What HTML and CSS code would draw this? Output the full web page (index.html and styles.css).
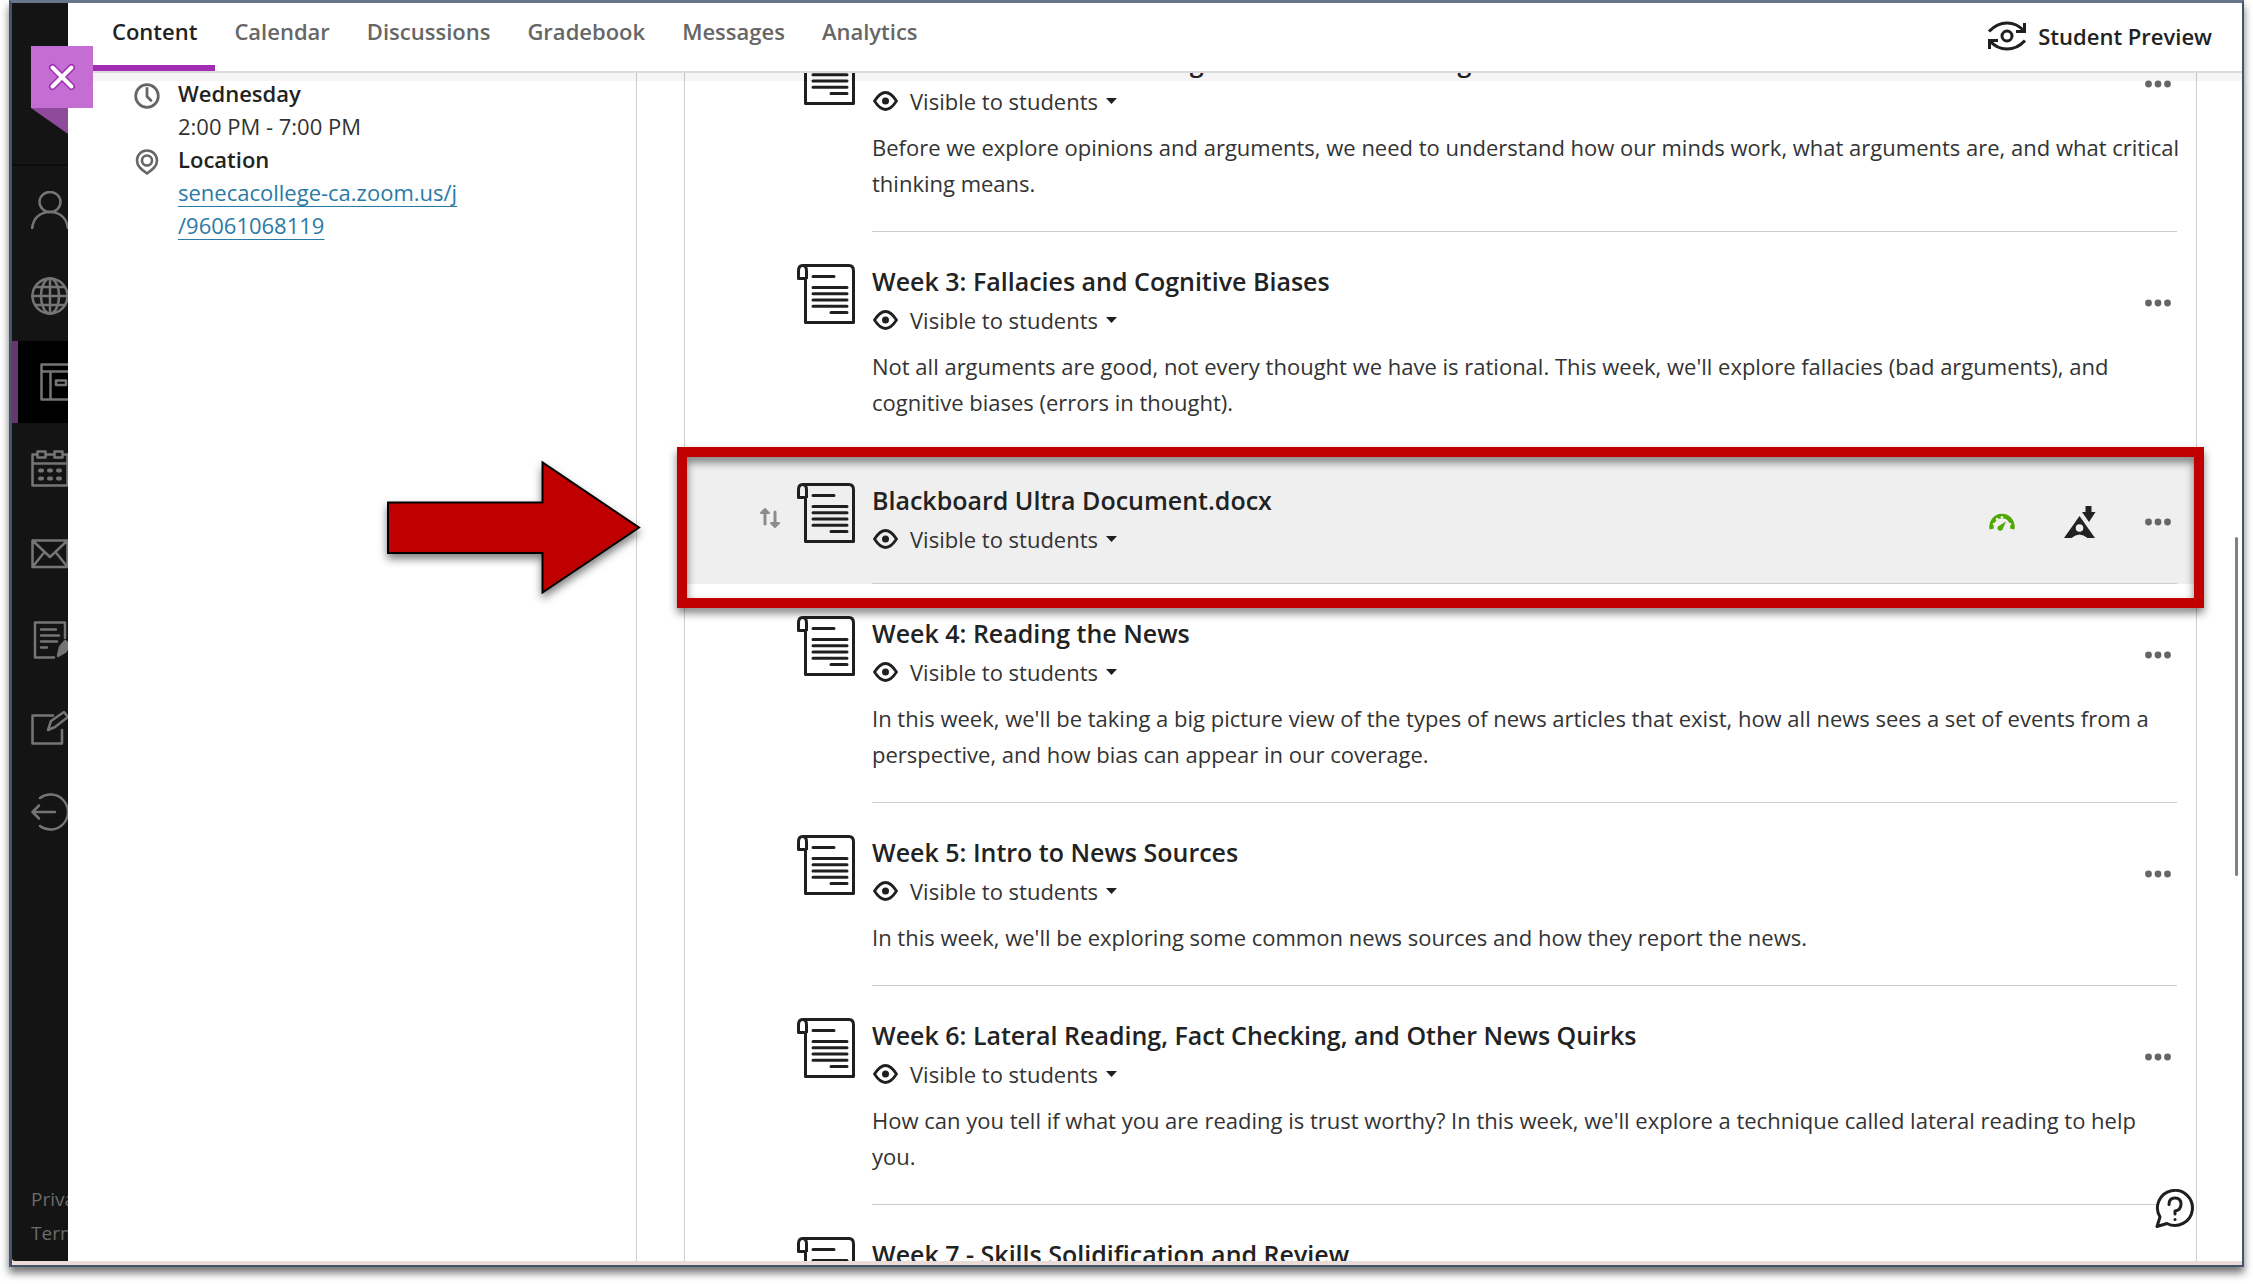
FILE: index.html
```html
<!DOCTYPE html>
<html lang="en">
<head>
<meta charset="utf-8">
<title>Course Content</title>
<link rel="stylesheet" href="styles.css">
</head>
<body>
<svg class="defs" aria-hidden="true">
  <symbol id="doc" viewBox="0 0 58 60">
    <g fill="none" stroke="#1f1f1f" stroke-width="3" stroke-linejoin="round">
      <path d="M8.5 15V58.5H56.500V7q0-5.500-4.500-5.500H6"/>
      <path d="M8.500 14.500H1.500V7q0-5.500 4-5.500t4 5.500V15"/>
    </g>
    <g stroke="#1f1f1f" stroke-width="3" stroke-linecap="round">
      <path d="M16 12.500H37M16 23.500H50M16 29.800H50M16 36H50M16 42.300H50M34 48.600H50"/>
    </g>
  </symbol>
  <symbol id="eye" viewBox="0 0 25 20">
    <path d="M1.500 10Q7 1.500 12.500 1.500T23.500 10Q18 18.500 12.500 18.500T1.500 10Z" fill="none" stroke="#1f1f1f" stroke-width="2.800" stroke-linejoin="round"/>
    <circle cx="12.500" cy="10" r="3.500" fill="#1f1f1f"/>
  </symbol>
  <symbol id="caret" viewBox="0 0 11 6"><path d="M0 0H11L5.500 6Z" fill="#1f1f1f"/></symbol>
  <symbol id="dots" viewBox="0 0 26 8">
    <g fill="#666"><circle cx="3.500" cy="4" r="3.400"/><circle cx="13" cy="4" r="3.400"/><circle cx="22.500" cy="4" r="3.400"/></g>
  </symbol>
</svg>

<div class="frame">
  <aside class="rail">
    <ul class="rail-list">
      <li><a href="#" aria-label="Profile"><svg width="38" height="38" viewBox="0 0 38 38"><ellipse cx="19" cy="11" rx="10.500" ry="10"/><path d="M1 38C2 27 9 21 19 21s17 6 18 17"/></svg></a></li>
      <li><a href="#" aria-label="Institution"><svg width="38" height="38" viewBox="0 0 38 38"><circle cx="19" cy="19" r="17.500"/><ellipse cx="19" cy="19" rx="9" ry="17.500"/><path d="M19 1V37M1 19H37M4.500 10H33.500M4.500 28H33.500"/></svg></a></li>
      <li class="active"><a href="#" aria-label="Courses"><svg width="38" height="38" viewBox="0 0 38 38"><path d="M1.500 1.500H46V36.500H1.500ZM1.500 8.500H46M10.500 8.500V36.500M16 17.500H26V22H16Z"/></svg></a></li>
      <li><a href="#" aria-label="Calendar"><svg width="38" height="38" viewBox="0 0 38 38"><path d="M1.500 5.500V36.500H36.500V5.500M1.500 14.500H36.500M1.500 5.500H6M15 5.500H23M32 5.500H36.500M6.500 2.500H14.500V8.500H6.500ZM23.500 2.500H31.500V8.500H23.500Z"/><path class="blob" d="M9 21.500H11M18 21.500H20M27 21.500H29M9 29.500H11M18 29.500H20M27 29.500H29"/></svg></a></li>
      <li><a href="#" aria-label="Messages"><svg width="38" height="38" viewBox="0 0 38 38"><path d="M1.500 5.500H36.500V32H1.500ZM1.500 5.500L19 22L36.500 5.500M1.500 32L13.500 17M36.500 32L24.500 17"/></svg></a></li>
      <li><a href="#" aria-label="Grades"><svg width="38" height="38" viewBox="0 0 38 38"><path d="M34 17V1.500H4V36.500H23M10 8.500H25M10 14.500H28M10 20.500H26M10 26.500H16"/><path class="solid" d="M27 35l2-9 5-6 5 4-5 7z"/></svg></a></li>
      <li><a href="#" aria-label="Tools"><svg width="38" height="38" viewBox="0 0 38 38"><path d="M22 8.500H1.500V36.500H31V23M17 23l3-9L33 5l4 5L24 20z"/></svg></a></li>
      <li><a href="#" aria-label="Sign Out"><svg width="38" height="38" viewBox="0 0 38 38"><path d="M9 5A17.500 17.500 0 1 1 9 33M24 19H2M8 12.500L1.500 19L8 25.500"/></svg></a></li>
    </ul>
    <div class="rail-foot"><a href="#">Privacy</a><a href="#">Terms</a></div>
  </aside>

  <div class="course">
    <header class="topbar">
      <nav class="tabs">
        <a href="#" class="current">Content</a><a href="#">Calendar</a><a href="#">Discussions</a><a href="#">Gradebook</a><a href="#">Messages</a><a href="#">Analytics</a>
      </nav>
      <button class="preview">
        <svg width="38" height="30" viewBox="0 0 38 30" fill="none" stroke="#1f1f1f" stroke-width="3"><circle cx="19" cy="15" r="5"/><path d="M1 10.500Q9 2 19 2T36 10M36.500 2V10.500H28M37 19.500Q29 28 19 28T2 20M1.500 28V19.500H10"/></svg>
        Student Preview
      </button>
    </header>

    <main class="main">
      <section class="details">
        <div class="detail">
          <svg width="26" height="26" viewBox="0 0 26 26" fill="none" stroke="#666" stroke-width="2.800"><circle cx="13" cy="13" r="11.300"/><path d="M13 5.500V13.500L17 17.500" stroke-linecap="round"/></svg>
          <div><strong>Wednesday</strong><span>2:00 PM - 7:00 PM</span></div>
        </div>
        <div class="detail">
          <svg width="26" height="26" viewBox="0 0 26 26" fill="none" stroke="#666" stroke-width="2.600"><path d="M13 24.500C7 20 3 17 3 11.500a10 10 0 0 1 20 0C23 17 19 20 13 24.500Z"/><circle cx="13" cy="11.500" r="5"/></svg>
          <div><strong>Location</strong><a href="#">senecacollege-ca.zoom.us/j<br>/96061068119</a></div>
        </div>
      </section>

      <section class="outline">
        <article class="item">
          <svg class="doc"><use href="#doc"/></svg>
          <div class="body">
            <div class="head">
              <div><h3>Week 2: Introduction to Arguments from Thinking</h3>
              <button class="status"><svg class="eye"><use href="#eye"/></svg>Visible to students<svg class="caret"><use href="#caret"/></svg></button></div>
              <div class="actions"><button aria-label="More options"><svg class="dots"><use href="#dots"/></svg></button></div>
            </div>
            <p>Before we explore opinions and arguments, we need to understand how our minds work, what arguments are, and what critical thinking means.</p>
          </div>
        </article>
        <article class="item">
          <svg class="doc"><use href="#doc"/></svg>
          <div class="body">
            <div class="head">
              <div><h3>Week 3: Fallacies and Cognitive Biases</h3>
              <button class="status"><svg class="eye"><use href="#eye"/></svg>Visible to students<svg class="caret"><use href="#caret"/></svg></button></div>
              <div class="actions"><button aria-label="More options"><svg class="dots"><use href="#dots"/></svg></button></div>
            </div>
            <p>Not all arguments are good, not every thought we have is rational. This week, we'll explore fallacies (bad arguments), and cognitive biases (errors in thought).</p>
          </div>
        </article>
        <article class="item selected">
          <svg class="drag" width="20" height="22" viewBox="0 0 20 22" fill="none" stroke="#8c8c8c" stroke-width="3"><path d="M5 17V4M15 5V18" stroke-linecap="round"/><path d="M1 6L5 2L9 6ZM11 16L15 20L19 16Z" stroke-width="2" fill="#8c8c8c" stroke-linejoin="round"/></svg>
          <svg class="doc"><use href="#doc"/></svg>
          <div class="body">
            <div class="head">
              <div><h3>Blackboard Ultra Document.docx</h3>
              <button class="status"><svg class="eye"><use href="#eye"/></svg>Visible to students<svg class="caret"><use href="#caret"/></svg></button></div>
              <div class="actions">
                <button aria-label="Accessibility score"><svg width="26" height="18" viewBox="0 0 26 18"><path d="M2.800 16A10.500 10.500 0 1 1 23.200 16" fill="none" stroke="#4fa800" stroke-width="4.500"/><g fill="#efefef"><circle cx="5" cy="11" r="1.300"/><circle cx="8" cy="6" r="1.300"/><circle cx="13" cy="4.200" r="1.300"/><circle cx="21" cy="11" r="1.300"/></g><path d="M17 8.500L9 13.500a2.600 2.600 0 1 0 4.500 3z" fill="#4fa800"/></svg></button>
                <button aria-label="Alternative formats"><svg width="32" height="32" viewBox="0 0 32 32"><path d="M15.500 10L31 32H23.500Q15.500 25 7.500 32H0Z" fill="#222"/><circle cx="15.500" cy="22" r="3.800" fill="#efefef"/><path d="M21.500 0H27.500V6H31.500L25 16L18 6H21.500Z" fill="#222" /></svg></button>
                <button aria-label="More options"><svg class="dots"><use href="#dots"/></svg></button>
              </div>
            </div>
          </div>
          <div class="callout-box"></div>
          <svg class="callout-arrow" width="254" height="134" viewBox="0 0 254 134"><path d="M1 42.500H155.500V2.500L252 67.500L155.500 132.500V93H1Z" fill="#c00000" stroke="#000" stroke-width="2"/></svg>
        </article>
        <article class="item">
          <svg class="doc"><use href="#doc"/></svg>
          <div class="body">
            <div class="head">
              <div><h3>Week 4: Reading the News</h3>
              <button class="status"><svg class="eye"><use href="#eye"/></svg>Visible to students<svg class="caret"><use href="#caret"/></svg></button></div>
              <div class="actions"><button aria-label="More options"><svg class="dots"><use href="#dots"/></svg></button></div>
            </div>
            <p>In this week, we'll be taking a big picture view of the types of news articles that exist, how all news sees a set of events from a perspective, and how bias can appear in our coverage.</p>
          </div>
        </article>
        <article class="item">
          <svg class="doc"><use href="#doc"/></svg>
          <div class="body">
            <div class="head">
              <div><h3>Week 5: Intro to News Sources</h3>
              <button class="status"><svg class="eye"><use href="#eye"/></svg>Visible to students<svg class="caret"><use href="#caret"/></svg></button></div>
              <div class="actions"><button aria-label="More options"><svg class="dots"><use href="#dots"/></svg></button></div>
            </div>
            <p>In this week, we'll be exploring some common news sources and how they report the news.</p>
          </div>
        </article>
        <article class="item">
          <svg class="doc"><use href="#doc"/></svg>
          <div class="body">
            <div class="head">
              <div><h3>Week 6: Lateral Reading, Fact Checking, and Other News Quirks</h3>
              <button class="status"><svg class="eye"><use href="#eye"/></svg>Visible to students<svg class="caret"><use href="#caret"/></svg></button></div>
              <div class="actions"><button aria-label="More options"><svg class="dots"><use href="#dots"/></svg></button></div>
            </div>
            <p>How can you tell if what you are reading is trust worthy? In this week, we'll explore a technique called lateral reading to help you.</p>
          </div>
        </article>
        <article class="item">
          <svg class="doc"><use href="#doc"/></svg>
          <div class="body">
            <div class="head"><div><h3>Week 7 - Skills Solidification and Review</h3></div></div>
          </div>
        </article>
      </section>
      <div class="scroll-thumb"></div>
    </main>
  </div>

  <button class="close" aria-label="Close"><svg width="28" height="28" viewBox="0 0 28 28" fill="none" stroke-linecap="round"><path d="M4.500 4.500L23.500 23.500M23.500 4.500L4.500 23.500" stroke="#a02db3" stroke-width="7"/><path d="M4.500 4.500L23.500 23.500M23.500 4.500L4.500 23.500" stroke="#fff" stroke-width="4"/></svg></button>
  <span class="close-fold"></span>
  <button class="help" aria-label="Help"><svg width="40" height="40" viewBox="0 0 40 40" fill="none" stroke="#1f1f1f" stroke-width="3" stroke-linecap="round" stroke-linejoin="round"><path fill="#fff" d="M2 37.500L5 28A17.500 17.500 0 1 1 12 34.500Z"/><path d="M14 15.500Q14 9 20 9T26 15T20 22V25"/><path d="M20 30.500V30.600"/></svg></button>
</div>
</body>
</html>
```
FILE: styles.css
```css
* { box-sizing: border-box; }

body {
  margin: 0;
  padding: 0 9px 17px;
  height: 100vh;
  overflow: hidden;
  background: #fff;
  color: #333;
  font: 22px/36px "Open Sans", "Noto Sans", sans-serif;
}

button {
  margin: 0;
  padding: 0;
  border: 0;
  background: none;
  font: inherit;
  color: inherit;
}

button svg, .item svg { display: block; }
.defs { position: absolute; width: 0; height: 0; }

.frame {
  position: relative;
  display: flex;
  height: 100%;
  padding-bottom: 4px;
  border: 2px solid #44546a;
  border-width: 3px 2px 2px 3px;
  border-top-color: #66768c;
  background: #eadbd6;
  box-shadow: 0 6px 8px rgba(0, 0, 0, 0.55);
}

/* Dark navigation rail */
.rail {
  flex: none;
  display: flex;
  flex-direction: column;
  justify-content: space-between;
  width: 56px;
  overflow: hidden;
  border-radius: 0 0 0 3px;
  background: #141414;
}

.rail-list {
  display: flex;
  flex-direction: column;
  gap: 4px;
  margin: 161px 0 0;
  padding: 3px 0 0;
  border-top: 2px solid #0c0c0c;
  list-style: none;
}

.rail-list a {
  display: flex;
  align-items: center;
  height: 82px;
  padding-left: 19px;
}

.rail-list svg {
  flex: none;
  fill: none;
  stroke: #757575;
  stroke-width: 2.5;
  stroke-linecap: round;
  stroke-linejoin: round;
}

.rail-list .blob { stroke-width: 4; }
.rail-list .solid { fill: #757575; }
.rail-list .active { background: #000; border-left: 6px solid #66376f; }
.rail-list .active a { padding-left: 22px; }

.rail-foot {
  display: flex;
  flex-direction: column;
  padding: 0 0 11px 19px;
  font-size: 19px;
  line-height: 34px;
}

.rail-foot a { color: #6b6b6b; text-decoration: none; }

/* Course panel */
.course {
  flex: 1;
  display: flex;
  flex-direction: column;
  min-width: 0;
  background: #fff;
}

.topbar {
  position: relative;
  z-index: 2;
  display: flex;
  justify-content: space-between;
  padding: 0 30px 0 25px;
  border-bottom: 2px solid #dcdcdc;
  background: #fff;
}

.topbar::after {
  content: "";
  position: absolute;
  inset: 100% 0 auto;
  margin-top: 2px;
  height: 8px;
  background: rgba(0, 0, 0, 0.04);
}

.tabs { display: flex; font-weight: 600; }

.tabs a {
  padding: 0 18px 5px 19px;
  border-bottom: 6px solid transparent;
  color: #666;
  line-height: 57px;
  text-decoration: none;
}

.tabs .current { border-color: #a02db3; color: #222; }

.preview {
  display: flex;
  align-items: center;
  gap: 12px;
  padding-bottom: 3px;
  color: #222;
  font-weight: 600;
}

.main {
  position: relative;
  flex: 1;
  display: grid;
  grid-template-columns: 569px 1fr;
  min-height: 0;
  overflow: hidden;
}

.details {
  padding: 4px 40px 0 66px;
  border-right: 1px solid #d0d0d0;
  line-height: 33px;
}

.detail { display: flex; gap: 18px; }
.detail svg { flex: none; margin-top: 6px; }
.detail strong, .detail span { display: block; }
.detail strong { color: #222; font-weight: 600; }

.detail a {
  color: #2b7aa5;
  text-decoration-thickness: 1px;
  text-underline-offset: 5px;
}

/* Content list, scrolled part-way down */
.outline {
  margin: -60px 45px 0 47px;
  border: solid #cfcfcf;
  border-width: 0 1px;
}

.item {
  position: relative;
  display: grid;
  grid-template-columns: 37px 75px 1fr;
  padding: 29px 19px 0 75px;
}

.item.selected { background: #efefef; }
.drag { margin-top: 27px; }

.doc {
  grid-column: 2;
  width: 58px;
  height: 60px;
  margin-top: 3px;
}

.body {
  padding-bottom: 25px;
  border-bottom: 1px solid #cdcdcd;
}

.head { display: flex; justify-content: space-between; }

.item h3 {
  margin: 0;
  color: #222;
  font-size: 25px;
  font-weight: 600;
  line-height: 40px;
}

.status {
  display: flex;
  align-items: center;
  line-height: 38px;
}

.eye { width: 25px; height: 20px; margin: 0 12px 0 1px; }
.caret { width: 11px; height: 6px; margin-left: 8px; }
.dots { width: 26px; height: 8px; }

.actions {
  display: flex;
  align-items: center;
  gap: 49px;
  padding: 6px 6px 0 0;
}

.item p { margin: 9px -6px 5px 0; }

/* Red callouts over the selected row */
.callout-box {
  position: absolute;
  z-index: 1;
  inset: -4px -8px -24px;
  border: 10px solid #c00000;
  filter: drop-shadow(0 5px 4px rgba(0, 0, 0, 0.5));
  pointer-events: none;
}

.callout-arrow {
  position: absolute;
  left: -298px;
  top: 9px;
  filter: drop-shadow(0 5px 4px rgba(0, 0, 0, 0.5));
}

.scroll-thumb {
  position: absolute;
  right: 4px;
  top: 464px;
  width: 3px;
  height: 339px;
  border-radius: 2px;
  background: #808080;
}

.close {
  position: absolute;
  z-index: 3;
  left: 19px;
  top: 43px;
  display: grid;
  place-items: center;
  width: 62px;
  height: 62px;
  background: #c46dd3;
}

.close-fold {
  position: absolute;
  left: 19px;
  top: 105px;
  width: 37px;
  height: 26px;
  background: #8f4a9b;
  clip-path: polygon(0 0, 100% 0, 100% 100%);
}

.help {
  position: absolute;
  right: 47px;
  bottom: 36px;
}
```
